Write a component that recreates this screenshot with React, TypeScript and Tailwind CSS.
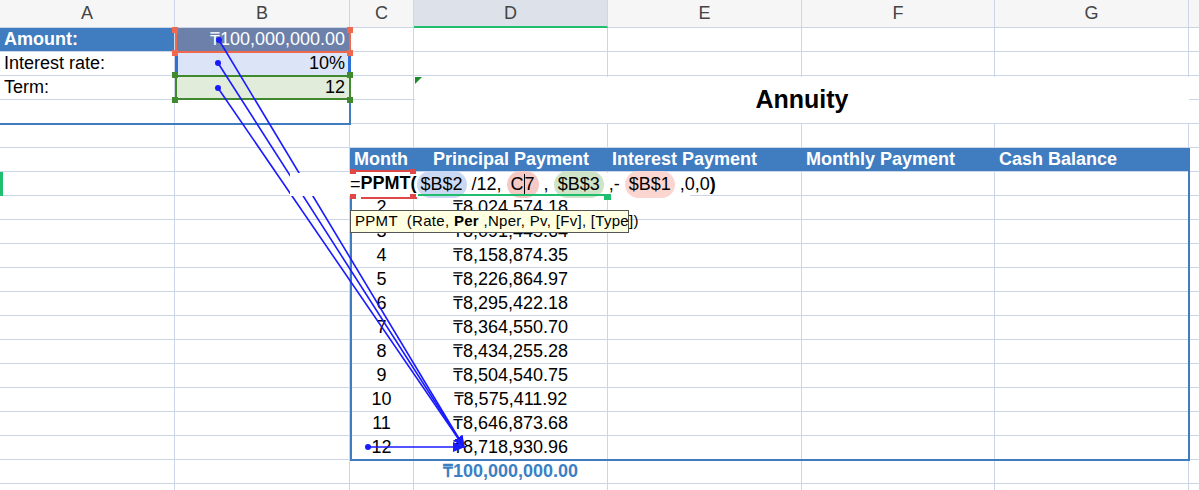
import React from "react";

const cols = [175, 175, 64, 194, 194, 193, 194, 11];
const letters = ["A", "B", "C", "D", "E", "F", "G", ""];

const data: [string, string][] = [
  ["2", "₸8,024,574.18"],
  ["3", "₸8,091,445.64"],
  ["4", "₸8,158,874.35"],
  ["5", "₸8,226,864.97"],
  ["6", "₸8,295,422.18"],
  ["7", "₸8,364,550.70"],
  ["8", "₸8,434,255.28"],
  ["9", "₸8,504,540.75"],
  ["10", "₸8,575,411.92"],
  ["11", "₸8,646,873.68"],
  ["12", "₸8,718,930.96"],
];

function Row({ cells, h = 24, noLines }: { cells: React.ReactNode[]; h?: number; noLines?: boolean[] }) {
  return (
    <div className="flex" style={{ height: h }}>
      {cols.map((w, i) => (
        <div
          key={i}
          className={`shrink-0 flex items-center overflow-visible border-b border-[#cdd6e8] ${noLines && noLines[i] ? "" : "border-r"}`}
          style={{ width: w }}
        >
          {cells[i]}
        </div>
      ))}
    </div>
  );
}

export default function App() {
  const rows: { c: React.ReactNode[]; nl?: boolean[] }[] = [];
  rows.push({ c: [
    <div className="w-full h-full bg-[#3f7cc0] text-white font-bold px-1 flex items-center">Amount:</div>,
    <div className="w-full h-full bg-[#6c80aa] text-white px-1 flex items-center justify-end">₸100,000,000.00</div>,
  ] });
  rows.push({ c: [
    <div className="px-1">Interest rate:</div>,
    <div className="w-full h-full bg-[#dce5f7] px-1 flex items-center justify-end">10%</div>,
  ] });
  rows.push({ c: [
    <div className="px-1">Term:</div>,
    <div className="w-full h-full bg-[#e1ecdb] px-1 flex items-center justify-end">12</div>,
  ] });
  rows.push({ c: [] });
  rows.push({ c: [] });
  const hdr = (t: string, center = false) => (
    <div className={`w-full h-full bg-[#3f7cc0] text-white font-bold flex items-center px-1 ${center ? "justify-center" : ""}`}>{t}</div>
  );
  rows.push({
    c: [<div />, <div />, hdr("Month"), hdr("Principal Payment", true), hdr("Interest Payment"), hdr("Monthly Payment"), hdr("Cash Balance")],
    nl: [false, false, true, true, true, true, false, false],
  });
  rows.push({ c: [] });
  data.forEach(([m, v]) => {
    rows.push({ c: [
      <div />, <div />,
      <div className="w-full text-center">{m}</div>,
      <div className="w-full text-center">{v}</div>,
    ] });
  });
  rows.push({ c: [
    <div />, <div />, <div />,
    <div className="w-full text-center font-bold text-[#3b7fc4]">₸100,000,000.00</div>,
  ] });
  rows.push({ c: [] });

  return (
    <div
      className="relative w-[1200px] h-[490px] overflow-hidden bg-white text-[18px] text-black"
      style={{ fontFamily: '"Liberation Sans", Arial, sans-serif' }}
    >
      <div className="flex h-[28px]">
        {cols.map((w, i) => (
          <div
            key={i}
            className={`shrink-0 flex items-center justify-center text-[18px] text-[#444] border-r border-b border-[#cdd6e8] ${i === 3 ? "bg-[#dde2ea] border-b-2 border-b-[#1fbf6f]" : "bg-[#f6f6f6]"}`}
            style={{ width: w }}
          >
            {letters[i]}
          </div>
        ))}
      </div>
      {rows.map((r, i) => (
        <Row key={i} cells={r.c} noLines={r.nl} />
      ))}

      <div className="absolute left-0 top-[172px] w-[3px] h-[24px] bg-[#1fbf6f]" />

      <div className="absolute left-[415px] top-[77px] w-[774px] h-[46px] bg-white flex items-center justify-center font-bold text-[25px]">
        Annuity
      </div>
      <div className="absolute left-[415px] top-[77px] w-0 h-0 border-t-[7px] border-t-[#1a8a2a] border-r-[7px] border-r-transparent" />

      <div className="absolute left-0 top-[123px] w-[351px] h-[2px] bg-[#3f7cc0]" />
      <div className="absolute left-[349px] top-[100px] w-[2px] h-[24px] bg-[#3f7cc0]" />

      <div className="absolute left-[350px] top-[148px] w-[840px] h-[313px] border-2 border-[#3f7cc0] pointer-events-none" />

      <div className="absolute left-[175px] top-[29px] w-[176px] h-[24px] border-x-2 border-b-2 border-[#f0694f]" />
      <div className="absolute left-[175px] top-[54px] w-[176px] h-[22px] border-x-[3px] border-[#2f6fd6]" />
      <div className="absolute left-[175px] top-[75px] w-[176px] h-[25px] border-2 border-[#3f8a2e]" />
      {[
        [172, 27, "#f0694f"], [347, 27, "#f0694f"], [172, 50, "#f0694f"], [347, 50, "#f0694f"],
        [172, 72, "#3f8a2e"], [347, 72, "#3f8a2e"], [172, 97, "#3f8a2e"], [347, 97, "#3f8a2e"],
      ].map(([x, y, c], i) => (
        <div key={i} className="absolute w-[6px] h-[6px]" style={{ left: x as number, top: y as number, background: c as string }} />
      ))}

      <svg className="absolute left-0 top-0" width="1200" height="490">
        <defs>
          <marker id="ah" markerWidth="12" markerHeight="10" refX="11" refY="5" orient="auto" markerUnits="userSpaceOnUse">
            <path d="M0,0 L12,5 L0,10 z" fill="#1a1aff" />
          </marker>
        </defs>
        {[[219, 40], [218, 63], [218, 88]].map(([x, y], i) => (
          <g key={i}>
            <circle cx={x} cy={y} r="3" fill="#1a1aff" />
            <line x1={x} y1={y} x2={464} y2={447} stroke="#1a1aff" strokeWidth="1.6" markerEnd="url(#ah)" />
          </g>
        ))}
        <circle cx={368} cy={447} r="3" fill="#1a1aff" />
        <line x1={368} y1={447} x2={464} y2={447} stroke="#1a1aff" strokeWidth="1.6" markerEnd="url(#ah)" />
      </svg>

      <div className="absolute left-[290px] top-[173px] w-[400px] h-[23px] bg-white" />
      <div className="absolute left-[350px] top-[173px] h-[23px] flex items-center whitespace-nowrap text-[18px]">
        <span>=</span>
        <span className="font-bold border-b-2 border-[#e04848]">PPMT(</span>
        <span className="bg-[#cbd8f3] rounded-full px-[4px]">$B$2</span>
        <span>&nbsp;/12,&nbsp;</span>
        <span className="bg-[#f5c9c6] rounded-full px-[4px]">C<span className="border-l border-black">7</span></span>
        <span>&nbsp;,&nbsp;</span>
        <span className="bg-[#cfe3c8] rounded-full px-[4px]">$B$3</span>
        <span>&nbsp;,-&nbsp;</span>
        <span className="bg-[#fbd5cf] rounded-full px-[4px]">$B$1</span>
        <span>&nbsp;,0,0</span>
        <span className="font-bold">)</span>
      </div>
      <div className="absolute left-[418px] top-[194px] w-[188px] h-[2px] bg-[#1fbf6f]" />
      <div className="absolute left-[604px] top-[194px] w-[7px] h-[6px] bg-[#1fbf6f]" />
      {[[350, 169], [350, 194], [410, 169], [410, 194]].map(([x, y], i) => (
        <div key={i} className="absolute w-[6px] h-[5px] bg-[#e04848]" style={{ left: x, top: y }} />
      ))}
      <div className="absolute left-[354px] top-[170px] w-[58px] h-[2px] bg-[#e04848]" />

      <div className="absolute left-[350px] top-[210px] h-[23px] w-[279px] px-1 bg-[#ffffe1] border border-[#555] flex items-center text-[15px] whitespace-nowrap tracking-[0.3px]">
        PPMT&nbsp;&nbsp;(Rate,&nbsp;<b>Per</b>&nbsp;,Nper,&nbsp;Pv,&nbsp;[Fv],&nbsp;[Type])
      </div>
    </div>
  );
}
